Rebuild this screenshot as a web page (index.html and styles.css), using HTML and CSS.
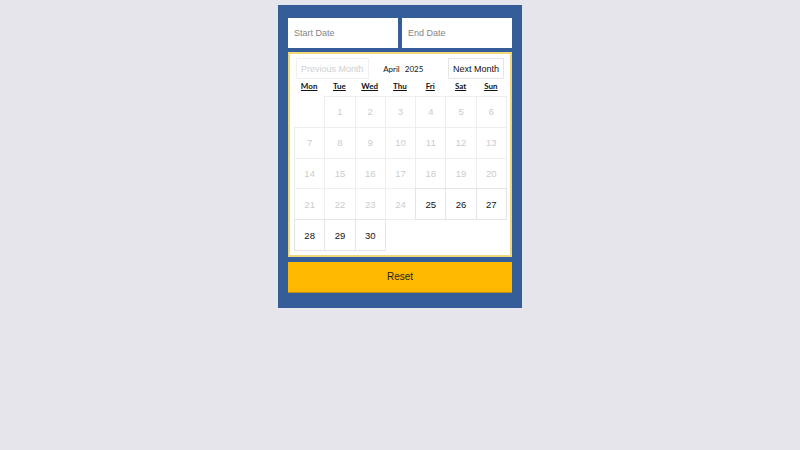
FILE: index.html
```html
<!DOCTYPE html>
<html>
<head>
<meta charset="utf-8">
<link rel="stylesheet" href="styles.css">
</head>
<body>
<div class="wrap">
  <div class="inputs">
    <input class="field" type="text" placeholder="Start Date">
    <input class="field" type="text" placeholder="End Date">
  </div>
  <div class="calendar">
    <div class="nav">
      <button class="navbtn disabled">Previous Month</button>
      <div class="title"><span>April</span><span>2025</span></div>
      <button class="navbtn">Next Month</button>
    </div>
    <div class="weekdays">
      <abbr>Mon</abbr><abbr>Tue</abbr><abbr>Wed</abbr><abbr>Thu</abbr><abbr>Fri</abbr><abbr>Sat</abbr><abbr>Sun</abbr>
    </div>
    <div class="days">
      <div class="blank"></div>
      <div class="day off">1</div><div class="day off">2</div><div class="day off">3</div><div class="day off">4</div><div class="day off">5</div><div class="day off">6</div>
      <div class="day off">7</div><div class="day off">8</div><div class="day off">9</div><div class="day off">10</div><div class="day off">11</div><div class="day off">12</div><div class="day off">13</div>
      <div class="day off">14</div><div class="day off">15</div><div class="day off">16</div><div class="day off">17</div><div class="day off">18</div><div class="day off">19</div><div class="day off">20</div>
      <div class="day off">21</div><div class="day off">22</div><div class="day off">23</div><div class="day off">24</div><div class="day">25</div><div class="day">26</div><div class="day">27</div>
      <div class="day">28</div><div class="day">29</div><div class="day">30</div>
    </div>
  </div>
  <button class="reset">Reset</button>
</div>
</body>
</html>
```
FILE: styles.css
```css
html, body {
  margin: 0;
  padding: 0;
  background: #e6e5eb;
}
body {
  font-family: "Liberation Sans", Arial, sans-serif;
}
.wrap {
  width: 224px;
  margin: 5px auto 0;
  padding: 13px 10px 15px;
  background: #345d99;
  display: flex;
  flex-direction: column;
}
.inputs {
  display: flex;
  gap: 4px;
}
.field {
  box-sizing: border-box;
  width: 110px;
  height: 30px;
  border: none;
  margin: 0;
  padding: 0 6px;
  font-family: "Liberation Sans", Arial, sans-serif;
  font-size: 9px;
  background: #fff;
  outline: none;
}
.field::placeholder {
  color: #858585;
}
.calendar {
  margin-top: 4px;
  background: #fff;
  border: 2px solid #f0d77a;
  padding: 4px 4px 5px;
  display: flex;
  flex-direction: column;
}
.nav {
  display: flex;
  align-items: center;
  padding: 0 2px;
}
.navbtn {
  box-sizing: border-box;
  height: 21px;
  padding: 0 4px;
  border: 1px solid #e6e6e6;
  background: #fff;
  font-family: "Liberation Sans", Arial, sans-serif;
  font-size: 9px;
  color: #111;
}
.navbtn.disabled {
  color: #cfcfcf;
  border-color: #f0f0f0;
}
.title {
  flex: 1;
  display: flex;
  justify-content: center;
  gap: 5px;
  margin-right: 10px;
  font-family: Lato, sans-serif;
  font-size: 8px;
  color: #111;
}
.weekdays {
  display: grid;
  grid-template-columns: repeat(7, 1fr);
  height: 17px;
  padding-top: 2px;
  box-sizing: border-box;
  align-items: start;
}
.weekdays abbr {
  text-align: center;
  font-family: Lato, sans-serif;
  font-weight: 700;
  font-size: 8px;
  color: #111;
  text-decoration: underline;
}
.days {
  display: grid;
  grid-template-columns: repeat(7, 1fr);
  grid-auto-rows: 30.8px;
}
.day {
  display: flex;
  align-items: center;
  justify-content: center;
  border: 1px solid #e4e4e4;
  margin: 0 -1px -1px 0;
  font-size: 9.5px;
  color: #111;
}
.day.off {
  color: #cccccc;
  border-color: #eeeeee;
}
.reset {
  margin-top: 5px;
  height: 31px;
  background: #ffb900;
  border: none;
  border-bottom: 1px solid #b98b20;
  font-family: "Liberation Sans", Arial, sans-serif;
  font-size: 10px;
  color: #222;
}
```
